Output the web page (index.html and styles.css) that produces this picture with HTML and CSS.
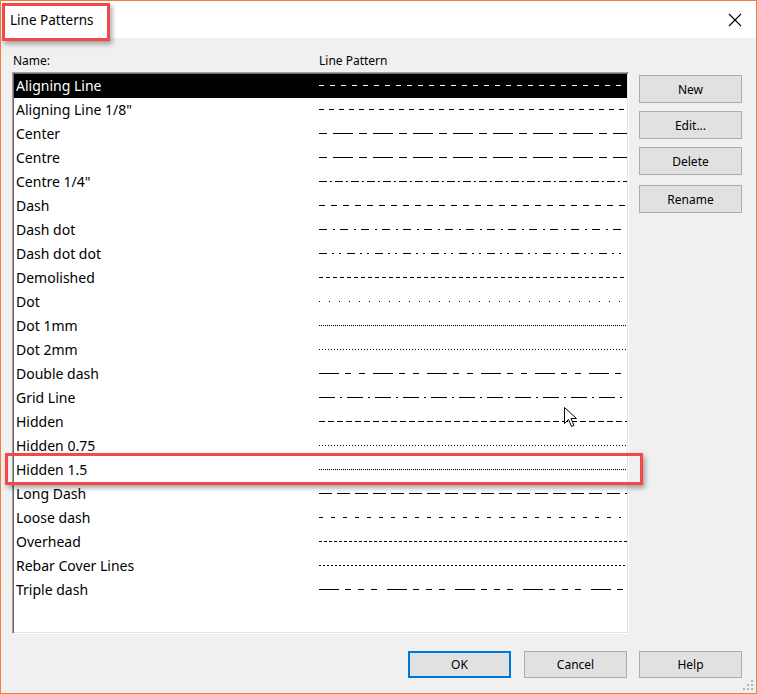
FILE: index.html
```html
<!DOCTYPE html>
<html>
<head>
<meta charset="utf-8">
<title>Line Patterns</title>
<link rel="stylesheet" href="styles.css">
</head>
<body>
<div class="window">
  <div class="titlebar">
    <span class="title">Line Patterns</span>
    <svg class="close" width="14" height="14" viewBox="0 0 14 14"><path d="M1 1 L13 13 M13 1 L1 13" stroke="#000" stroke-width="1.1" fill="none"/></svg>
  </div>
  <div class="content">
    <div class="labels">
      <span class="lbl-name">Name:</span>
      <span class="lbl-pattern">Line Pattern</span>
    </div>
    <div class="main">
      <div class="listbox">
        <div class="row selected"><span class="name">Aligning Line</span><svg class="pat" width="308" height="24"><line x1="0" y1="11.5" x2="308" y2="11.5" stroke="#fff" stroke-dasharray="5 6"/></svg></div>
        <div class="row"><span class="name">Aligning Line 1/8"</span><svg class="pat" width="308" height="24"><line x1="0" y1="11.5" x2="308" y2="11.5" stroke-dasharray="5 5"/></svg></div>
        <div class="row"><span class="name">Center</span><svg class="pat" width="308" height="24"><line x1="0" y1="11.5" x2="308" y2="11.5" stroke-dasharray="8 6 20 6"/></svg></div>
        <div class="row"><span class="name">Centre</span><svg class="pat" width="308" height="24"><line x1="0" y1="11.5" x2="308" y2="11.5" stroke-dasharray="8 6 20 6"/></svg></div>
        <div class="row"><span class="name">Centre 1/4"</span><svg class="pat" width="308" height="24"><line x1="0" y1="11.5" x2="308" y2="11.5" stroke-dasharray="8 3 2 3"/></svg></div>
        <div class="row"><span class="name">Dash</span><svg class="pat" width="308" height="24"><line x1="0" y1="11.5" x2="308" y2="11.5" stroke-dasharray="6 6"/></svg></div>
        <div class="row"><span class="name">Dash dot</span><svg class="pat" width="308" height="24"><line x1="0" y1="11.5" x2="302" y2="11.5" stroke-dasharray="8 6 2 5"/></svg></div>
        <div class="row"><span class="name">Dash dot dot</span><svg class="pat" width="308" height="24"><line x1="0" y1="11.5" x2="302" y2="11.5" stroke-dasharray="8 5 2 5 2 6"/></svg></div>
        <div class="row"><span class="name">Demolished</span><svg class="pat" width="308" height="24"><line x1="0" y1="11.5" x2="308" y2="11.5" stroke-dasharray="4 3"/></svg></div>
        <div class="row"><span class="name">Dot</span><svg class="pat" width="308" height="24"><line x1="0" y1="11.5" x2="302" y2="11.5" stroke-dasharray="1 9"/></svg></div>
        <div class="row"><span class="name">Dot 1mm</span><svg class="pat" width="308" height="24"><line x1="0" y1="11.5" x2="307" y2="11.5" stroke-dasharray="1 1"/></svg></div>
        <div class="row"><span class="name">Dot 2mm</span><svg class="pat" width="308" height="24"><line x1="0" y1="11.5" x2="307" y2="11.5" stroke-dasharray="1 2"/></svg></div>
        <div class="row"><span class="name">Double dash</span><svg class="pat" width="308" height="24"><line x1="0" y1="11.5" x2="303" y2="11.5" stroke-dasharray="20 6 6 8 6 8"/></svg></div>
        <div class="row"><span class="name">Grid Line</span><svg class="pat" width="308" height="24"><line x1="0" y1="11.5" x2="303" y2="11.5" stroke-dasharray="16 5 2 5"/></svg></div>
        <div class="row"><span class="name">Hidden</span><svg class="pat" width="308" height="24"><line x1="0" y1="11.5" x2="308" y2="11.5" stroke-dasharray="6 3"/></svg></div>
        <div class="row"><span class="name">Hidden 0.75</span><svg class="pat" width="308" height="24"><line x1="0" y1="11.5" x2="307" y2="11.5" stroke-dasharray="1 2"/></svg></div>
        <div class="row"><span class="name">Hidden 1.5</span><svg class="pat" width="308" height="24"><line x1="0" y1="11.5" x2="307" y2="11.5" stroke-dasharray="1 1"/></svg></div>
        <div class="row"><span class="name">Long Dash</span><svg class="pat" width="308" height="24"><line x1="0" y1="11.5" x2="308" y2="11.5" stroke-dasharray="13 5"/></svg></div>
        <div class="row"><span class="name">Loose dash</span><svg class="pat" width="308" height="24"><line x1="0" y1="11.5" x2="302" y2="11.5" stroke-dasharray="4 8"/></svg></div>
        <div class="row"><span class="name">Overhead</span><svg class="pat" width="308" height="24"><line x1="0" y1="11.5" x2="308" y2="11.5" stroke-dasharray="3 2"/></svg></div>
        <div class="row"><span class="name">Rebar Cover Lines</span><svg class="pat" width="308" height="24"><line x1="0" y1="11.5" x2="306" y2="11.5" stroke-dasharray="2 2"/></svg></div>
        <div class="row"><span class="name">Triple dash</span><svg class="pat" width="308" height="24"><line x1="0" y1="11.5" x2="306" y2="11.5" stroke-dasharray="20 6 6 7 6 7 6 10"/></svg></div>
      </div>
      <div class="side">
        <button class="btn">New</button>
        <button class="btn">Edit...</button>
        <button class="btn">Delete</button>
        <button class="btn rename">Rename</button>
      </div>
    </div>
    <div class="footer">
      <button class="btn default">OK</button>
      <button class="btn">Cancel</button>
      <button class="btn">Help</button>
    </div>
  </div>
  <svg class="grip" width="12" height="12" viewBox="0 0 12 12">
    <rect x="9" y="1" width="2" height="2" fill="#b4b4b4"/>
    <rect x="5" y="5" width="2" height="2" fill="#b4b4b4"/>
    <rect x="9" y="5" width="2" height="2" fill="#b4b4b4"/>
    <rect x="1" y="9" width="2" height="2" fill="#b4b4b4"/>
    <rect x="5" y="9" width="2" height="2" fill="#b4b4b4"/>
    <rect x="9" y="9" width="2" height="2" fill="#b4b4b4"/>
  </svg>
  <div class="mark mark-title"></div>
  <div class="mark mark-row"></div>
  <svg class="cursor" width="14" height="21" viewBox="0 0 14 21"><path d="M0.5 0.5 L0.5 16.5 L4.5 12.5 L7.5 19.5 L10 18.5 L7 11.5 L12.5 11.5 Z" fill="#fff" stroke="#000" stroke-width="1" stroke-linejoin="miter"/></svg>
</div>
</body>
</html>
```

FILE: styles.css
```css
html, body {
  margin: 0;
  padding: 0;
}
body {
  width: 757px;
  height: 694px;
  overflow: hidden;
  font-family: "Noto Sans", "Open Sans", sans-serif;
  color: #000;
}
.window {
  position: relative;
  box-sizing: border-box;
  width: 757px;
  height: 694px;
  border: 1px solid #ef7f3c;
  background: #f0f0f0;
  display: flex;
  flex-direction: column;
}
.titlebar {
  height: 37px;
  background: #fff;
  display: flex;
  align-items: center;
  justify-content: space-between;
  padding: 0 14px 0 9px;
  flex-shrink: 0;
}
.title {
  font-size: 13.5px;
  line-height: 16px;
  margin-top: 0;
}
.close {
  display: block;
}
.content {
  flex: 1;
  padding: 0 14px 0 11px;
  display: flex;
  flex-direction: column;
}
.labels {
  display: flex;
  font-size: 12px;
  line-height: 16px;
  padding-top: 15px;
  height: 16px;
  margin-bottom: 3px;
}
.lbl-name {
  width: 306px;
  padding-left: 1px;
}
.main {
  display: flex;
  gap: 10px;
  height: 562px;
}
.listbox {
  box-sizing: border-box;
  width: 618px;
  height: 562px;
  background: #fff;
  border-top: 1px solid #a0a0a0;
  border-left: 1px solid #a0a0a0;
  border-right: 1px solid #fff;
  border-bottom: 1px solid #fff;
  box-shadow: inset 1px 1px 0 #696969, inset -1px -1px 0 #e3e3e3;
  padding: 1px 1px 1px 1px;
  overflow: hidden;
}
.row {
  display: flex;
  align-items: center;
  height: 24px;
  font-size: 14px;
}
.row .name {
  width: 303px;
  padding-left: 2px;
  padding-bottom: 2px;
  white-space: nowrap;
}
.row.selected {
  background: #000;
  color: #fff;
}
.pat {
  display: block;
  flex-shrink: 0;
  stroke: #000;
  stroke-width: 1;
  shape-rendering: crispEdges;
}
.side {
  display: flex;
  flex-direction: column;
  padding-top: 3px;
  gap: 8px;
}
.btn {
  box-sizing: border-box;
  width: 103px;
  height: 28px;
  background: #e1e1e1;
  border: 1px solid #adadad;
  font-family: "Noto Sans", "Open Sans", sans-serif;
  font-size: 12px;
  color: #000;
  padding: 0;
  margin: 0;
}
.btn.rename {
  margin-top: 2px;
}
.footer {
  display: flex;
  justify-content: flex-end;
  gap: 13px;
  margin-top: 17px;
}
.footer .btn {
  height: 27px;
}
.footer .btn:last-child {
  margin-left: -1px;
}
.btn.default {
  border: 2px solid #0078d7;
}
.grip {
  position: absolute;
  right: 2px;
  bottom: 2px;
}
.mark {
  position: absolute;
  box-sizing: border-box;
  border: 3px solid #f24848;
  box-shadow: 2px 3px 5px rgba(0, 0, 0, 0.35);
}
.mark-title {
  left: 1px;
  top: 2px;
  width: 108px;
  height: 38px;
}
.mark-row {
  left: 4px;
  top: 452px;
  width: 638px;
  height: 32px;
}
.cursor {
  position: absolute;
  left: 563px;
  top: 406px;
}
```
